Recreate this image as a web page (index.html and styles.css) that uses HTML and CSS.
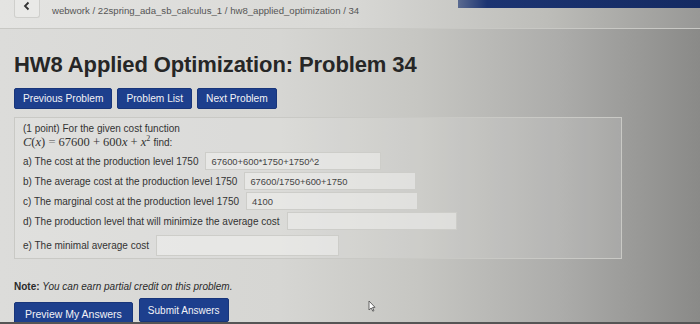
FILE: index.html
```html
<!DOCTYPE html>
<html>
<head>
<meta charset="utf-8">
<link rel="stylesheet" href="styles.css">
</head>
<body>
<div class="page">
  <header class="topbar">
    <div class="back"><svg width="8" height="10" viewBox="0 0 8 10"><path d="M5.5 1.5 L2 5 L5.5 8.5" fill="none" stroke="#333" stroke-width="1.8"/></svg></div>
    <div class="crumbs">webwork / 22spring_ada_sb_calculus_1 / hw8_applied_optimization / 34</div>
    <div class="bluestrip"></div>
  </header>
  <main class="content">
    <h1 class="title">HW8 Applied Optimization: Problem 34</h1>
    <nav class="navbtns">
      <button class="btn">Previous Problem</button>
      <button class="btn">Problem List</button>
      <button class="btn">Next Problem</button>
    </nav>
    <section class="problem">
      <div class="line">(1 point) For the given cost function</div>
      <div class="line math"><span class="mi">C</span>(<span class="mi">x</span>) <span class="eq">=</span> 67600 + 600<span class="mi">x</span> + <span class="mi">x</span><sup>2</sup> <span class="sans">find:</span></div>
      <div class="row"><span>a) The cost at the production level 1750</span><span class="input w-a">67600+600*1750+1750^2</span></div>
      <div class="row"><span>b) The average cost at the production level 1750</span><span class="input w-b">67600/1750+600+1750</span></div>
      <div class="row"><span>c) The marginal cost at the production level 1750</span><span class="input w-c">4100</span></div>
      <div class="row"><span>d) The production level that will minimize the average cost</span><span class="input w-d"></span></div>
      <div class="row row-e"><span>e) The minimal average cost</span><span class="input w-e"></span></div>
    </section>
    <p class="note"><b>Note:</b> <i>You can earn partial credit on this problem.</i></p>
    <div class="submit">
      <button class="btn big low">Preview My Answers</button>
      <button class="btn big small">Submit Answers</button>
    </div>
  </main>
  <svg class="cursor" width="8" height="12" viewBox="0 0 8 12"><path d="M1 1 L1 10 L3.2 8 L4.8 11.2 L6 10.6 L4.5 7.5 L7 7.3 Z" fill="#fff" stroke="#555" stroke-width="0.9"/></svg>
  <div class="bottomline"></div>
</div>
</body>
</html>
```
FILE: styles.css
```css
* { box-sizing: border-box; }
html, body { margin: 0; padding: 0; }
body {
  width: 700px;
  height: 324px;
  overflow: hidden;
  font-family: "Liberation Sans", Arial, sans-serif;
  color: #2a2a2a;
  background: linear-gradient(to right, #dcdcda 0%, #d6d6d3 40%, #c6c6c2 60%, #acacaa 80%, #8a8a88 100%);
}
.page {
  position: relative;
  width: 700px;
  height: 324px;
  overflow: hidden;
  display: flex;
  flex-direction: column;
}
.topbar {
  flex-shrink: 0;
  height: 29px;
  display: flex;
  align-items: flex-start;
  border-bottom: 1px solid #c8c8c4;
  background: linear-gradient(to right, #e4e4e2 0%, #d8d8d5 50%, #bdbdb9 78%, #989896 100%);
}
.back {
  margin-left: 14px;
  width: 26px;
  height: 18px;
  background: #e9e9e7;
  border: 1px solid #cfcfcc;
  border-top: none;
  border-radius: 0 0 3px 3px;
  display: flex;
  justify-content: center;
  padding-top: 1px;
}
.crumbs {
  margin-left: 12px;
  margin-top: 5px;
  font-size: 9.6px;
  color: #555;
}
.bluestrip {
  margin-left: auto;
  width: 242px;
  height: 8px;
  background: linear-gradient(to right, #5a6a90 0%, #1c3472 12%, #142a62 100%);
}
.content {
  flex-shrink: 0;
  padding: 0 0 0 14px;
  display: flex;
  flex-direction: column;
}
.title {
  margin: 23px 0 0 0;
  font-size: 22px;
  font-weight: bold;
  color: #262626;
  line-height: 26px;
  letter-spacing: -0.1px;
}
.navbtns {
  margin-top: 10px;
  display: flex;
  gap: 5px;
}
.btn {
  font-family: "Liberation Sans", Arial, sans-serif;
  background: #1d3f8d;
  color: #f2f2f6;
  border: 1px solid #18357a;
  border-radius: 2px;
  font-size: 10.2px;
  height: 21px;
  padding: 0 8px;
}
.problem {
  margin-top: 8px;
  width: 608px;
  height: 142px;
  border: 1px solid #c9c9c5;
  background: rgba(255,255,255,0.12);
  padding: 4px 8px;
  font-size: 10px;
  color: #333;
}
.line { line-height: 13px; }
.math { font-family: "Liberation Serif", "Times New Roman", serif; font-size: 12.5px; line-height: 14px; }
.mi { font-style: italic; }
.eq { color: #777; }
.sans { font-family: "Liberation Sans", Arial, sans-serif; font-size: 10px; }
sup { font-size: 8px; line-height: 0; }
.row {
  display: flex;
  align-items: center;
  gap: 7px;
  height: 20px;
}
.line + .line + .row { margin-top: 1px; }
.row-e { margin-top: 3px; height: 22px; }
.input {
  height: 18px;
  border: 1px solid #cdcdc9;
  background: rgba(240,240,238,0.55);
  font-size: 9.4px;
  color: #444;
  padding: 0 5px;
  display: flex;
  align-items: center;
}
.w-a { width: 176px; }
.w-b { width: 172px; }
.w-c { width: 172px; }
.w-d { width: 170px; }
.w-e { width: 183px; height: 21px; }
.note {
  margin: 22px 0 0 0;
  font-size: 10px;
  color: #2a2a2a;
}
.note b { font-weight: bold; }
.submit {
  margin-top: 6px;
  display: flex;
  gap: 6px;
  align-items: flex-start;
}
.btn.big {
  font-size: 10.5px;
  height: 24px;
  padding: 0 10px;
}
.btn.small { font-size: 10px; padding: 0 8px; }
.btn.low { margin-top: 4px; }
.cursor {
  position: absolute;
  left: 368px;
  top: 300px;
}
.bottomline {
  position: absolute;
  left: 0;
  bottom: 0;
  width: 700px;
  height: 2px;
  background: #555;
}
```
